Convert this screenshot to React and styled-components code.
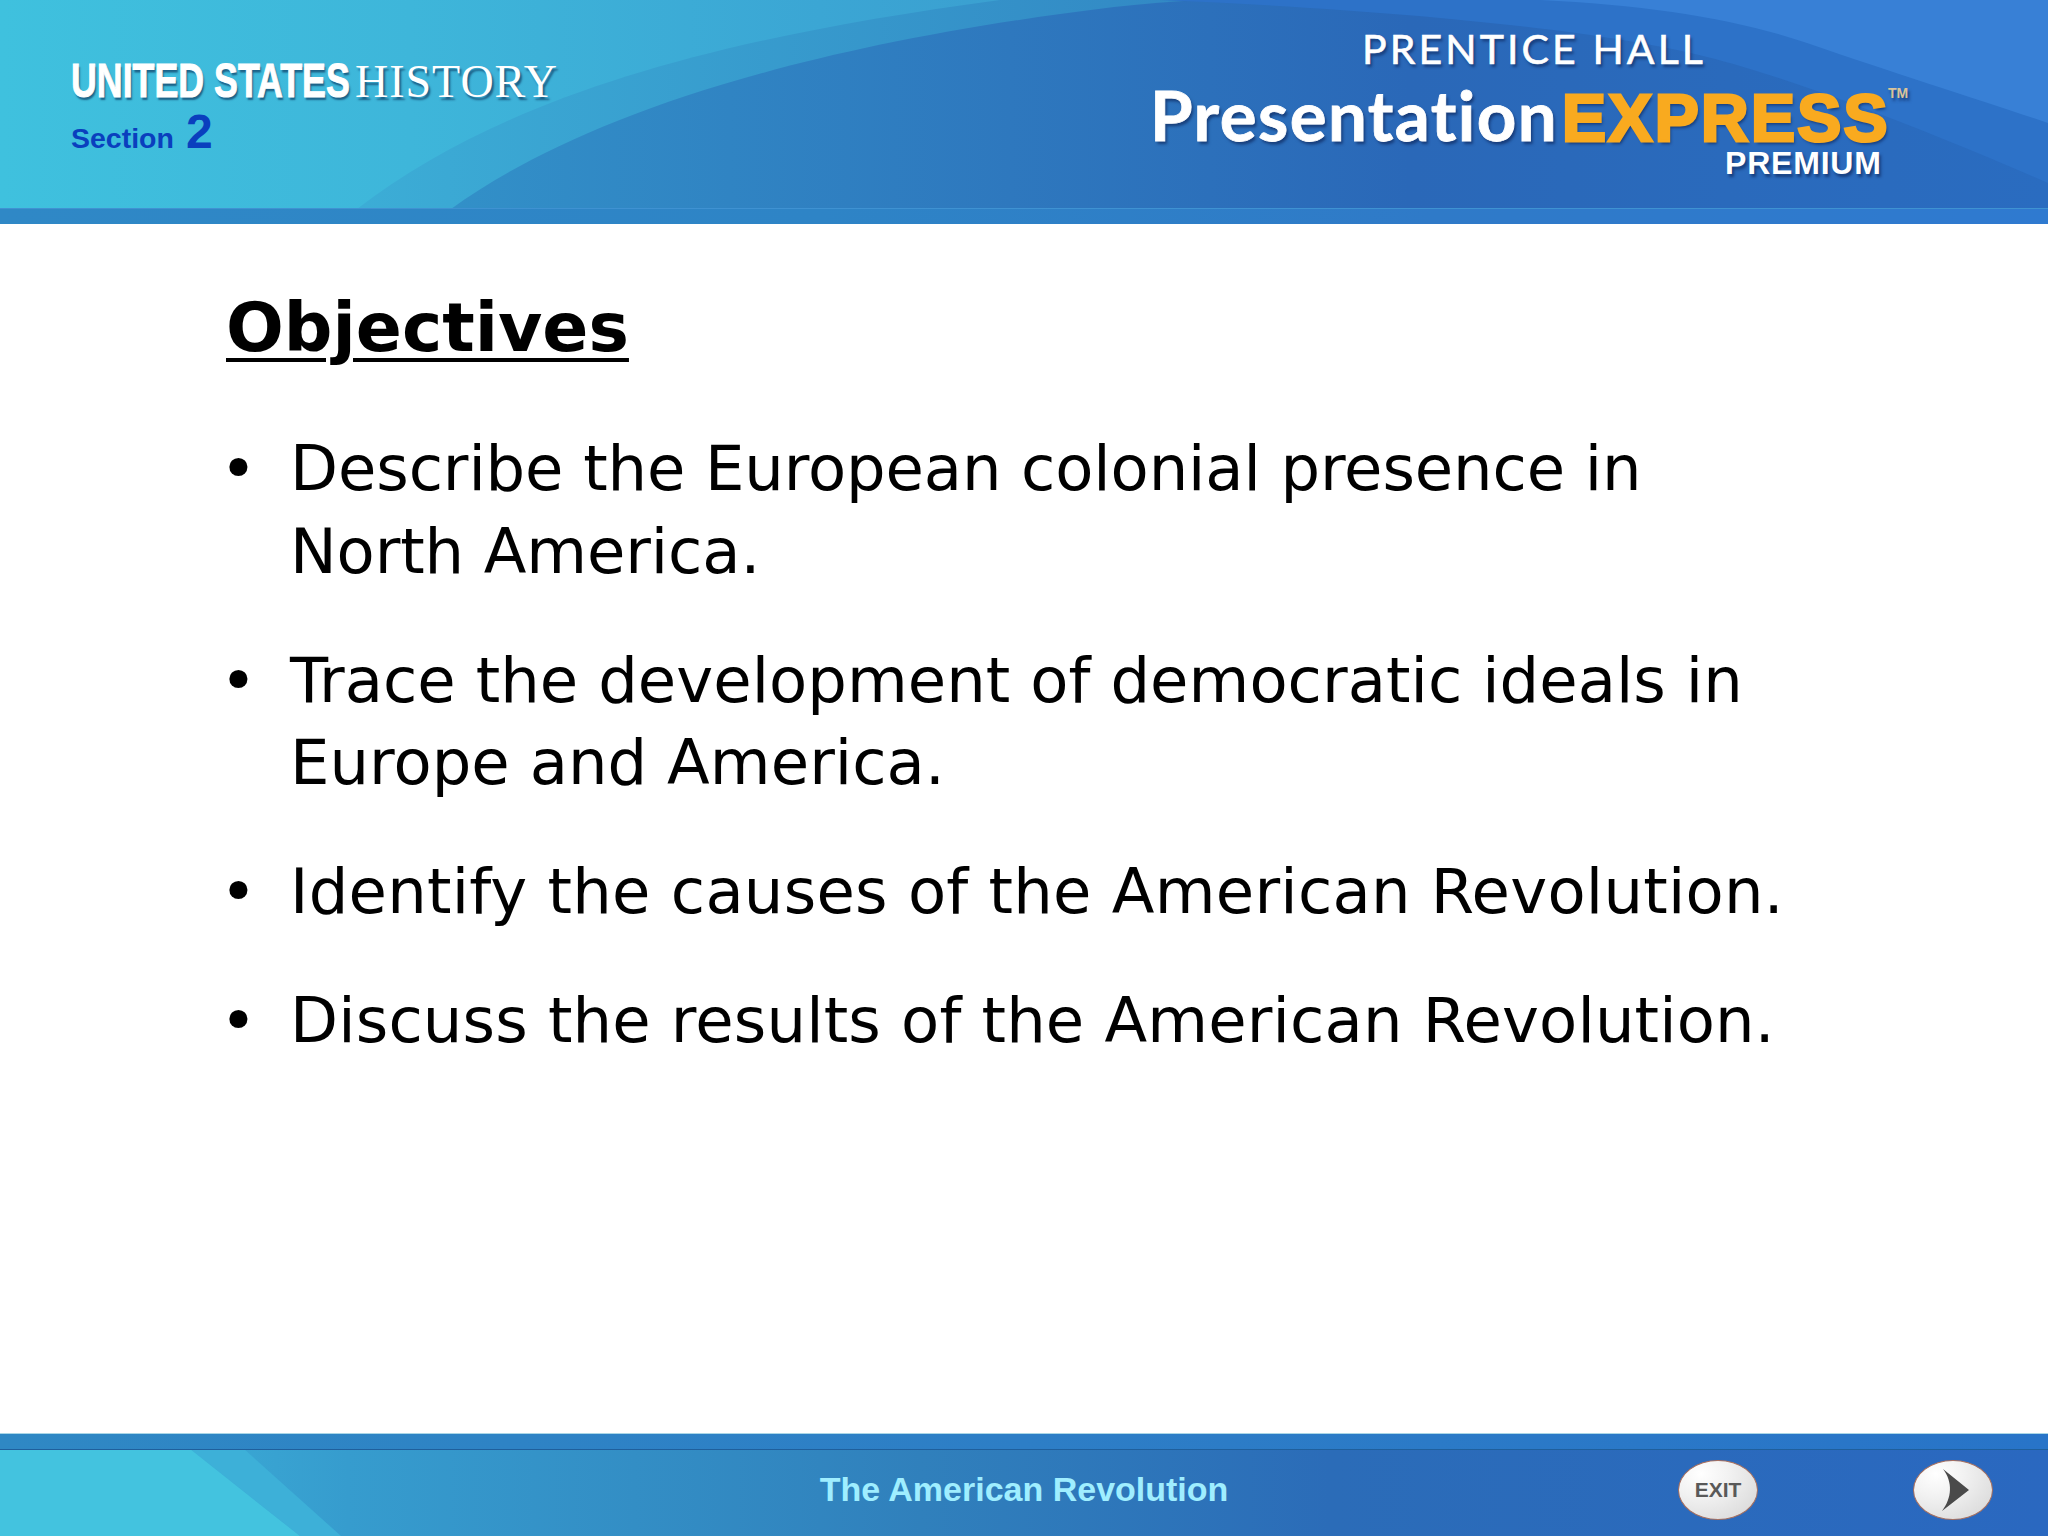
import React from "react";
import styled, { createGlobalStyle } from "styled-components";

const GlobalStyle = createGlobalStyle`
  html, body {
    margin: 0;
    padding: 0;
    background: #fff;
  }
  #root {
    width: 2048px;
    height: 1536px;
  }
`;

const Slide = styled.div`
  width: 2048px;
  height: 1536px;
  display: flex;
  flex-direction: column;
  overflow: hidden;
`;

const Header = styled.header`
  position: relative;
  height: 224px;
  flex: none;
  background: linear-gradient(90deg, #3fc1de 0%, #3eb6da 20%, #3ba6d4 40%, #3a98cc 60%);
`;

const Swoosh = styled.svg`
  position: absolute;
  inset: 0;
  width: 100%;
  height: 100%;
`;

const HeaderBand = styled.div`
  position: absolute;
  left: 0;
  right: 0;
  bottom: 0;
  height: 15px;
  background: linear-gradient(90deg, #2f88c6 0%, #2e84c6 40%, #2f7ac8 70%, #2f7ad0 100%);
  border-top: 1px solid #3f92d2;
`;

const HeaderInner = styled.div`
  position: relative;
  display: flex;
  justify-content: space-between;
  height: 208px;
`;

const BookBlock = styled.div`
  padding: 53px 0 0 71px;
`;

const BookTitle = styled.div`
  display: flex;
  align-items: baseline;
  height: 50px;
  color: #fff;
  text-shadow: 2px 3px 2px rgba(10, 50, 90, 0.65);
`;

const BookBold = styled.span`
  font: 700 48px "Liberation Sans", sans-serif;
  width: 284px;
  white-space: nowrap;
  -webkit-text-stroke: 1px #fff;
  transform: scaleX(0.745);
  transform-origin: left center;
`;

const BookThin = styled.span`
  font: 400 46px "Liberation Serif", serif;
  letter-spacing: 1px;
  white-space: nowrap;
`;

const SectionLine = styled.div`
  display: flex;
  align-items: baseline;
  gap: 12px;
  margin-top: 1px;
  color: #0a3fbe;
  font-family: "Liberation Sans", sans-serif;
  font-weight: 700;
`;

const SectionLabel = styled.span`
  font-size: 28.5px;
`;

const SectionNumber = styled.span`
  font-size: 48px;
`;

const BrandBlock = styled.div`
  position: relative;
  display: flex;
  flex-direction: column;
  width: 752px;
  margin-right: 146px;
  padding-top: 24px;
  color: #fff;
  text-shadow: 2px 3px 3px rgba(10, 30, 80, 0.6);
`;

const Publisher = styled.div`
  font: 400 41px Lato, sans-serif;
  letter-spacing: 3.1px;
  line-height: 50px;
  margin-left: 212px;
  white-space: nowrap;
  -webkit-text-stroke: 0.6px #fff;
`;

const BrandLine = styled.div`
  display: flex;
  align-items: baseline;
  box-sizing: border-box;
  height: 72px;
  padding-top: 11px;
  line-height: 60px;
  white-space: nowrap;
`;

const BrandWord = styled.span`
  font-family: Lato, sans-serif;
  font-size: 69px;
  font-weight: 700;
  letter-spacing: 1.4px;
  width: 412px;
  -webkit-text-stroke: 0.8px #fff;
`;

const BrandExpress = styled.span`
  font-family: "Liberation Sans", sans-serif;
  font-size: 66px;
  font-weight: 700;
  color: #f9aa1f;
  -webkit-text-stroke: 3px #f9aa1f;
  letter-spacing: 2.3px;
`;

const Trademark = styled.span`
  position: absolute;
  left: 738px;
  top: 85px;
  font: 700 14px "Liberation Sans", sans-serif;
  color: #d9c49a;
`;

const Edition = styled.div`
  font: 700 32px "Liberation Sans", sans-serif;
  line-height: 34px;
  margin: 0 0 0 575px;
  letter-spacing: 0.8px;
`;

const Content = styled.main`
  flex: 1;
  padding: 62px 0 0 226px;
  font-family: "DejaVu Sans", sans-serif;
  color: #000;
`;

const Heading = styled.h1`
  margin: 0 0 58px;
  font-size: 68px;
  font-weight: 700;
  line-height: 84px;
  text-decoration: underline;
  text-decoration-thickness: 4px;
  text-underline-offset: 7px;
`;

const Objectives = styled.ul`
  list-style: none;
  margin: 0;
  padding: 0;
  display: flex;
  flex-direction: column;
  gap: 46.5px;
`;

const Objective = styled.li`
  display: flex;
  font-size: 62.4px;
  line-height: 82.5px;
  letter-spacing: ${(props) => props.$tracking || 0}px;
`;

const Bullet = styled.span`
  width: 70px;
  margin-left: -6px;
  flex: none;
`;

const Footer = styled.footer`
  position: relative;
  height: 103px;
  flex: none;
  display: grid;
  grid-template-columns: 1fr auto 1fr;
  align-items: center;
  box-sizing: border-box;
  padding-top: 9px;
  background: linear-gradient(90deg, #3fc1de 0%, #3aa8d4 10%, #369cce 17%, #3080bc 45%, #2b6cb8 65%, #2a68c0 100%);
  border-top: 1px solid #a9d6e6;
`;

const FooterBand = styled.div`
  position: absolute;
  left: 0;
  right: 0;
  top: 0;
  height: 15px;
  background: linear-gradient(90deg, #2f88c4 0%, #2d7ec6 50%, #2874c8 100%);
  border-bottom: 1px solid #1f5f9c;
`;

const FooterTitle = styled.div`
  position: relative;
  grid-column: 2;
  font: 700 34px "Liberation Sans", sans-serif;
  color: #9feeff;
`;

const FooterNav = styled.nav`
  position: relative;
  grid-column: 3;
  display: flex;
  justify-content: flex-end;
  gap: 155px;
  padding-right: 55px;
`;

const NavButton = styled.button`
  width: 80px;
  height: 60px;
  padding: 0;
  border-radius: 50%;
  border: 1.5px solid #a8705f;
  background: radial-gradient(ellipse at 28% 22%, #ffffff 0%, #f2f2f2 35%, #d4d4d4 100%);
  color: #595959;
  font: 700 21px "Liberation Sans", sans-serif;
  display: flex;
  align-items: center;
  justify-content: center;
`;

const objectives = [
  { lines: ["Describe the European colonial presence in", "North America."], tracking: -0.1 },
  { lines: ["Trace the development of democratic ideals in", "Europe and America."], tracking: 0.06 },
  { lines: ["Identify the causes of the American Revolution."], tracking: 0.25 },
  { lines: ["Discuss the results of the American Revolution."], tracking: 0.17 },
];

export default function App() {
  return (
    <Slide>
      <GlobalStyle />
      <Header>
        <Swoosh viewBox="0 0 2048 224" preserveAspectRatio="none">
          <defs>
            <linearGradient id="outerFill" x1="357" y1="0" x2="1200" y2="0" gradientUnits="userSpaceOnUse">
              <stop offset="0" stopColor="#3cadd6" />
              <stop offset="1" stopColor="#3288c4" />
            </linearGradient>
            <linearGradient id="innerFill" x1="451" y1="0" x2="2048" y2="0" gradientUnits="userSpaceOnUse">
              <stop offset="0" stopColor="#3290c8" />
              <stop offset="0.35" stopColor="#2e78be" />
              <stop offset="0.6" stopColor="#2a68b8" />
              <stop offset="1" stopColor="#2a6cc0" />
            </linearGradient>
          </defs>
          <path d="M357 209 C500 100 700 40 1000 0 L2048 0 L2048 209Z" fill="url(#outerFill)" />
          <path d="M451 209 C560 130 760 50 1114 7 Q1160 2 1200 0 L2048 0 L2048 209Z" fill="url(#innerFill)" />
          <path d="M1160 0 C1400 10 1600 30 1707 57 C1800 80 1950 140 2048 183 L2048 0Z" fill="#2d72c8" />
          <path d="M1540 0 C1650 5 1740 20 1807 43 C1900 75 1980 100 2048 123 L2048 0Z" fill="#3880d6" />
        </Swoosh>
        <HeaderBand />
        <HeaderInner>
          <BookBlock>
            <BookTitle>
              <BookBold>UNITED STATES</BookBold>
              <BookThin>HISTORY</BookThin>
            </BookTitle>
            <SectionLine>
              <SectionLabel>Section</SectionLabel>
              <SectionNumber>2</SectionNumber>
            </SectionLine>
          </BookBlock>
          <BrandBlock>
            <Publisher>PRENTICE HALL</Publisher>
            <BrandLine>
              <BrandWord>Presentation</BrandWord>
              <BrandExpress>EXPRESS</BrandExpress>
            </BrandLine>
            <Trademark>TM</Trademark>
            <Edition>PREMIUM</Edition>
          </BrandBlock>
        </HeaderInner>
      </Header>
      <Content>
        <Heading>Objectives</Heading>
        <Objectives>
          {objectives.map((item) => (
            <Objective key={item.lines[0]} $tracking={item.tracking}>
              <Bullet>•</Bullet>
              <span>
                {item.lines.map((line) => (
                  <div key={line}>{line}</div>
                ))}
              </span>
            </Objective>
          ))}
        </Objectives>
      </Content>
      <Footer>
        <Swoosh viewBox="0 0 2048 103" preserveAspectRatio="none">
          <path d="M245 16 L341 103 L300 103 L191 16Z" fill="#3db0d8" />
          <path d="M0 16 L191 16 L300 103 L0 103Z" fill="#43c3df" />
        </Swoosh>
        <FooterBand />
        <FooterTitle>The American Revolution</FooterTitle>
        <FooterNav>
          <NavButton>EXIT</NavButton>
          <NavButton>
            <svg width="34" height="44" viewBox="0 0 34 44">
              <path d="M7 1 L33 22 L6 43 C16 30 17 14 7 1Z" fill="#4a4a4a" />
            </svg>
          </NavButton>
        </FooterNav>
      </Footer>
    </Slide>
  );
}
